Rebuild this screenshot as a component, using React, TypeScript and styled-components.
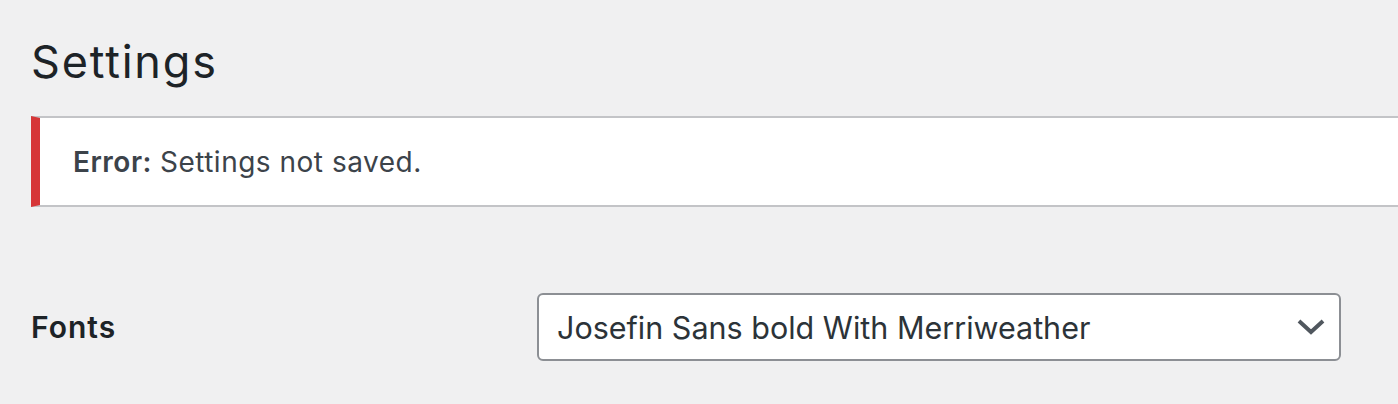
import styled, { createGlobalStyle } from 'styled-components';

const GlobalStyle = createGlobalStyle`
    html, body {
        margin: 0;
        padding: 0;
        background: #f0f0f1;
        overflow: hidden;
    }
    body {
        font-family: Inter, Roboto, "Liberation Sans", sans-serif;
        color: #3c434a;
    }
`;

const Page = styled.div`
    height: 404px;
    padding: 0 0 0 31px;
    box-sizing: border-box;
`;

const Title = styled.h1`
    margin: 0;
    padding: 34px 0 0;
    font-size: 45px;
    font-weight: 400;
    line-height: 56px;
    letter-spacing: 1.8px;
    color: #1d2327;
`;

const Notice = styled.div`
    margin-top: 26px;
    width: 1400px;
    height: 91px;
    box-sizing: border-box;
    display: flex;
    align-items: center;
    background: #fff;
    border: 2px solid #c3c4c7;
    border-right: none;
    border-left: 9px solid #d63638;
    padding-left: 33px;
    font-size: 28px;
    letter-spacing: 0.5px;
    color: #3c434a;

    strong {
        font-weight: 600;
        margin-right: 8px;
    }
`;

const FormRow = styled.div`
    margin-top: 86px;
    display: flex;
    align-items: center;
`;

const Label = styled.label`
    width: 506px;
    font-size: 30px;
    font-weight: 600;
    letter-spacing: 1px;
    color: #1d2327;
`;

const Select = styled.div`
    width: 804px;
    height: 68px;
    box-sizing: border-box;
    display: flex;
    align-items: center;
    justify-content: space-between;
    padding: 0 14px 0 18px;
    background: #fff;
    border: 2px solid #8c8f94;
    border-radius: 6px;
    font-size: 30.5px;
    color: #2c3338;
`;

const Chevron = () => (
    <svg width="28" height="18" viewBox="0 0 28 18">
        <path d="M2 3 L14 14 L26 3" fill="none" stroke="#50575e" strokeWidth="4" />
    </svg>
);

const App = () => (
    <>
        <GlobalStyle />
        <Page>
            <Title>Settings</Title>
            <Notice>
                <strong>Error:</strong> Settings not saved.
            </Notice>
            <FormRow>
                <Label>Fonts</Label>
                <Select>
                    <span>Josefin Sans bold With Merriweather</span>
                    <Chevron />
                </Select>
            </FormRow>
        </Page>
    </>
);

export default App;
